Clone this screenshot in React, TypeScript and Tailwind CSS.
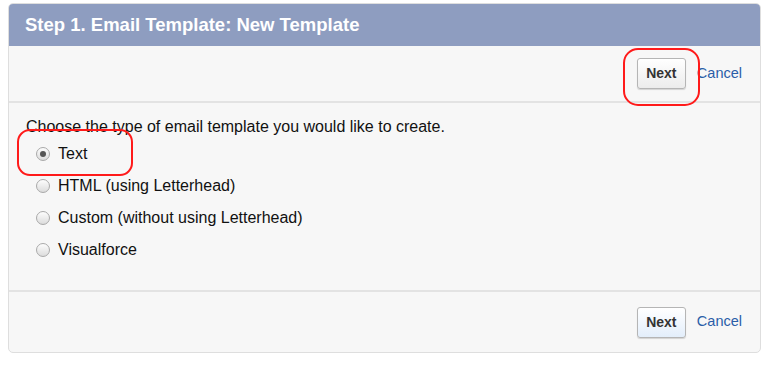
import React from "react";

const options = [
  "Text",
  "HTML (using Letterhead)",
  "Custom (without using Letterhead)",
  "Visualforce",
];

const Radio: React.FC<{ checked?: boolean }> = ({ checked }) => (
  <span className="flex h-[14px] w-[14px] shrink-0 items-center justify-center rounded-full border border-[#a9a9a9] bg-gradient-to-b from-[#fdfdfd] to-[#dcdcdc]">
    {checked && <span className="h-[6px] w-[6px] rounded-full bg-[#555]" />}
  </span>
);

const NextButton: React.FC<{ light?: boolean }> = ({ light }) => (
  <button
    className={`h-[31px] w-[49px] rounded-[3px] border border-[#b5b5b5] text-[14px] font-bold text-[#333] shadow-[0_1px_1px_rgba(0,0,0,0.15)] ${
      light
        ? "bg-gradient-to-b from-[#ffffff] to-[#e3eefb]"
        : "bg-gradient-to-b from-[#ffffff] to-[#ececec]"
    }`}
  >
    Next
  </button>
);

const ButtonRow: React.FC<{ light?: boolean }> = ({ light }) => (
  <div className="flex items-center justify-end gap-[11px] pr-[18px]">
    <NextButton light={light} />
    <a className="text-[14.5px] text-[#2b5ea8]">Cancel</a>
  </div>
);

export default function App() {
  return (
    <div
      className="relative h-[375px] w-[768px] bg-white pt-[3px] pl-[8px]"
      style={{ fontFamily: '"Liberation Sans", Arial, sans-serif' }}
    >
      <div className="flex h-[350px] w-[753px] flex-col overflow-hidden rounded-[5px] border border-[#dedede] bg-[#f7f7f7]">
        <div className="flex h-[42px] shrink-0 items-center bg-[#8e9dc0] pl-[16px]">
          <h2 className="text-[18.5px] font-bold text-white">
            Step 1. Email Template: New Template
          </h2>
        </div>
        <div className="flex h-[57px] shrink-0 items-center justify-end border-b-2 border-[#e3e3e3]">
          <ButtonRow />
        </div>
        <div className="flex h-[189px] shrink-0 flex-col border-b-2 border-[#e3e3e3] pl-[17px] pt-[12px]">
          <p className="text-[16px] text-[#111]">
            Choose the type of email template you would like to create.
          </p>
          <div className="mt-[5px] flex flex-col gap-[12px] pl-[10px]">
            {options.map((o, i) => (
              <label key={o} className="flex h-[20px] items-center gap-[8px] text-[16px] text-[#111]">
                <Radio checked={i === 0} />
                {o}
              </label>
            ))}
          </div>
        </div>
        <div className="flex flex-1 items-center justify-end">
          <ButtonRow light />
        </div>
      </div>

      <svg className="pointer-events-none absolute left-0 top-0" width="768" height="375">
        <rect x="624" y="49" width="75" height="56" rx="14" fill="none" stroke="#ff1a1a" strokeWidth="2" />
        <rect x="18" y="130" width="114" height="45" rx="12" fill="none" stroke="#ff1a1a" strokeWidth="2" />
      </svg>
    </div>
  );
}
